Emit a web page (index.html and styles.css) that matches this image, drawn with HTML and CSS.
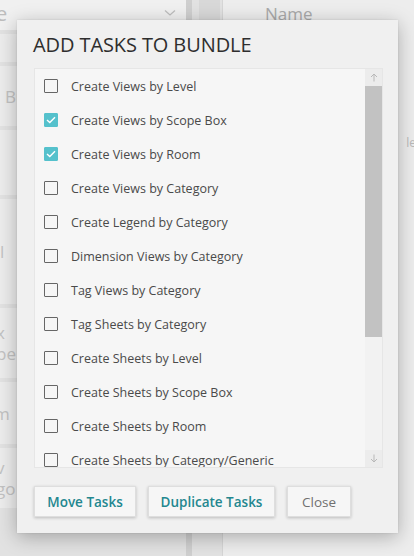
FILE: index.html
```html
<!DOCTYPE html>
<html>
<head>
<meta charset="utf-8">
<link rel="stylesheet" href="styles.css">
</head>
<body>
<div class="page">
  <div class="left">
    <div class="combo"><span class="combo-text">e</span><svg class="chev" width="12" height="8" viewBox="0 0 12 8"><path d="M1 1.5 L6 6 L11 1.5" fill="none" stroke="#bdbdbd" stroke-width="1.3"/></svg></div>
    <div class="card c1"></div>
    <div class="card c2"><span>Bu</span></div>
    <div class="card c3"></div>
    <div class="card c4"><span>l</span></div>
    <div class="card c5"><span>x<br>pe</span></div>
    <div class="card c6"><span>m</span></div>
    <div class="card c7"><span>v<br>go</span></div>
  </div>
  <div class="divider"><div class="bar1"></div><div class="bar2"></div></div>
  <div class="right">
    <div class="head">Name</div>
    <div class="rrow"><span>lev</span></div>
  </div>
</div>

<div class="dialog">
  <h1 class="title">ADD TASKS TO BUNDLE</h1>
  <div class="listbox">
    <div class="items">
      <div class="item"><span class="cb"></span><span class="label">Create Views by Level</span></div>
      <div class="item"><span class="cb on"><svg width="10" height="8" viewBox="0 0 10 8"><path d="M1 4 L3.8 6.6 L9 1.2" fill="none" stroke="#fff" stroke-width="1.4"/></svg></span><span class="label">Create Views by Scope Box</span></div>
      <div class="item"><span class="cb on"><svg width="10" height="8" viewBox="0 0 10 8"><path d="M1 4 L3.8 6.6 L9 1.2" fill="none" stroke="#fff" stroke-width="1.4"/></svg></span><span class="label">Create Views by Room</span></div>
      <div class="item"><span class="cb"></span><span class="label">Create Views by Category</span></div>
      <div class="item"><span class="cb"></span><span class="label">Create Legend by Category</span></div>
      <div class="item"><span class="cb"></span><span class="label">Dimension Views by Category</span></div>
      <div class="item"><span class="cb"></span><span class="label">Tag Views by Category</span></div>
      <div class="item"><span class="cb"></span><span class="label">Tag Sheets by Category</span></div>
      <div class="item"><span class="cb"></span><span class="label">Create Sheets by Level</span></div>
      <div class="item"><span class="cb"></span><span class="label">Create Sheets by Scope Box</span></div>
      <div class="item"><span class="cb"></span><span class="label">Create Sheets by Room</span></div>
      <div class="item"><span class="cb"></span><span class="label">Create Sheets by Category/Generic</span></div>
    </div>
    <div class="scrollbar">
      <div class="sb-btn"><svg width="8" height="9" viewBox="0 0 8 9"><path d="M4 8.5 V1 M1 4 L4 1 L7 4" fill="none" stroke="#b8b8b8" stroke-width="1"/></svg></div>
      <div class="thumb"></div>
      <div class="track"></div>
      <div class="sb-btn"><svg width="8" height="9" viewBox="0 0 8 9"><path d="M4 0.5 V8 M1 5 L4 8 L7 5" fill="none" stroke="#b8b8b8" stroke-width="1"/></svg></div>
    </div>
  </div>
  <div class="actions">
    <button class="btn primary">Move Tasks</button>
    <button class="btn primary">Duplicate Tasks</button>
    <button class="btn plain">Close</button>
  </div>
</div>
</body>
</html>
```

FILE: styles.css
```css
* { box-sizing: border-box; }
html, body { margin: 0; padding: 0; }
body {
  width: 414px;
  height: 556px;
  overflow: hidden;
  background: #e4e4e4;
  font-family: "Segoe UI", "Open Sans", "Noto Sans", sans-serif;
  position: relative;
}
.page {
  display: flex;
  height: 556px;
}
.left {
  width: 186px;
  display: flex;
  flex-direction: column;
  gap: 4px;
  background: #e2e2e2;
}
.combo {
  height: 30px;
  background: #f0f0f0;
  display: flex;
  align-items: center;
  justify-content: space-between;
  padding: 0 10px 4px 0;
  color: #bdbdbd;
  font-size: 20px;
}
.combo-text { margin-left: -4px; }
.card {
  background: #ececec;
  color: #c2c2c2;
  font-size: 17px;
  display: flex;
  align-items: center;
  padding-left: 2px;
  line-height: 21px;
}
.c1 { height: 28px; }
.c2 { height: 60px; }
.c2 span { margin-left: 3px; }
.c3 { height: 65px; }
.c4 { height: 105px; }
.c4 span { margin-left: -2px; }
.c5 { height: 70px; }
.c5 span { margin-left: -6px; }
.c6 { height: 62px; }
.c6 span { margin-left: -8px; }
.c7 { height: 60px; }
.c7 span { margin-left: -6px; }
.divider {
  width: 37px;
  display: flex;
  gap: 7px;
  background: #e2e2e2;
  border-right: 1px solid #d6d6d6;
}
.bar1 { width: 6px; background: #cfcfcf; height: 100%; }
.bar2 { width: 21px; background: #d8d8d8; height: 40px; }
.right {
  flex: 1;
  background: #ededed;
  display: flex;
  flex-direction: column;
}
.head {
  height: 32px;
  padding: 2px 0 0 42px;
  color: #a9a9a9;
  font-size: 17px;
}
.rrow {
  margin-top: 90px;
  height: 40px;
  display: flex;
  align-items: center;
  justify-content: flex-end;
  color: #b9b9b9;
  font-size: 12px;
  overflow: hidden;
}
.rrow span { margin-right: -8px; }

.dialog {
  position: absolute;
  left: 17px;
  top: 20px;
  width: 381px;
  height: 513px;
  background: #f0f0f0;
  box-shadow: 0 4px 18px rgba(0,0,0,0.28), 0 0 2px rgba(0,0,0,0.1);
  padding: 14px 15px 0 16px;
  display: flex;
  flex-direction: column;
}
.title {
  margin: 0 0 12px 0;
  font-size: 20px;
  font-weight: 400;
  color: #2e2e2e;
  line-height: 22px;
  height: 22px;
  letter-spacing: -0.1px;
}
.listbox {
  margin-left: 1px;
  height: 400px;
  background: #f6f6f6;
  border: 1px solid #e6e6e6;
  display: flex;
  overflow: hidden;
}
.items {
  flex: 1;
  overflow: hidden;
}
.item {
  height: 34px;
  display: flex;
  align-items: center;
  padding-left: 9px;
  gap: 13px;
}
.cb {
  width: 14px;
  height: 14px;
  border: 1.5px solid #666;
  border-radius: 1px;
  display: flex;
  align-items: center;
  justify-content: center;
  flex: none;
}
.cb.on {
  background: #55c1cc;
  border-color: #55c1cc;
}
.label {
  font-size: 12.5px;
  color: #4a4a4a;
}
.scrollbar {
  width: 17px;
  display: flex;
  flex-direction: column;
  background: #f0f0f0;
}
.sb-btn {
  height: 17px;
  display: flex;
  align-items: center;
  justify-content: center;
  background: #ececec;
}
.thumb {
  height: 251px;
  background: #c2c2c2;
}
.track { flex: 1; background: #f2f2f2; }
.actions {
  display: flex;
  gap: 12px;
  margin-top: 18px;
  margin-left: 1px;
}
.btn {
  height: 31px;
  background: #f6f6f6;
  border: 1px solid #dedede;
  box-shadow: 0 1px 3px rgba(0,0,0,0.22);
  font-family: inherit;
  font-size: 13.5px;
  padding: 0;
}
.btn.primary {
  color: #23878f;
  font-weight: 600;
}
.btn.plain {
  color: #707070;
}
.actions .btn:nth-child(1) { width: 102px; }
.actions .btn:nth-child(2) { width: 127px; }
.actions .btn:nth-child(3) { width: 64px; }
```
